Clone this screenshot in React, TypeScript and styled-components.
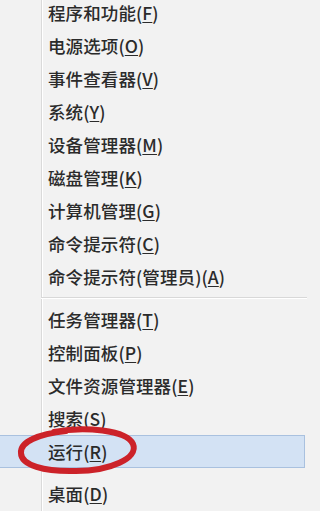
import React from 'react';
import styled, { createGlobalStyle } from 'styled-components';

type Entry = {
  label: string;
  key: string;
  active?: boolean;
  spaced?: boolean;
};

const GlobalStyle = createGlobalStyle`
  html,
  body {
    margin: 0;
    padding: 0;
    background: #f2f2f2;
    overflow: hidden;
  }
`;

const Menu = styled.div`
  position: relative;
  width: 307px;
  height: 511px;
  overflow: hidden;
  background-color: #f2f2f2;
  background-image: linear-gradient(
    to right,
    transparent 41px,
    #dadada 41px,
    #dadada 42px,
    #ffffff 42px,
    #ffffff 43px,
    transparent 43px
  );
  font-family: 'Noto Sans CJK SC', 'Noto Sans', sans-serif;
`;

const List = styled.div`
  display: flex;
  flex-direction: column;
  margin-top: -4px;
`;

const Item = styled.div<{ $active?: boolean; $spaced?: boolean }>`
  box-sizing: border-box;
  height: 33px;
  display: flex;
  align-items: center;
  padding-left: 48px;
  margin-top: ${(p) => (p.$spaced ? '9px' : '0')};
  font-size: 17.5px;
  font-weight: 500;
  color: #2b2b2b;
  letter-spacing: 0.1px;
  background: ${(p) => (p.$active ? '#d3e2f4' : 'transparent')};
  border: 1px solid ${(p) => (p.$active ? '#a9c1df' : 'transparent')};
  border-left: none;
  margin-right: ${(p) => (p.$active ? '2px' : '0')};

  u {
    text-decoration-thickness: 1px;
    text-underline-offset: 2px;
  }
`;

const Separator = styled.div`
  height: 10px;
  margin-left: 41px;
  box-sizing: border-box;
  padding-top: 4px;

  &::before {
    content: '';
    display: block;
    height: 1px;
    background: #d8d8d8;
    border-bottom: 1px solid #ffffff;
  }
`;

const Circle = styled.svg`
  position: absolute;
  left: 14px;
  top: 424px;
  width: 126px;
  height: 54px;
  pointer-events: none;
`;

const topGroup: Entry[] = [
  { label: '程序和功能', key: 'F' },
  { label: '电源选项', key: 'O' },
  { label: '事件查看器', key: 'V' },
  { label: '系统', key: 'Y' },
  { label: '设备管理器', key: 'M' },
  { label: '磁盘管理', key: 'K' },
  { label: '计算机管理', key: 'G' },
  { label: '命令提示符', key: 'C' },
  { label: '命令提示符(管理员)', key: 'A' },
];

const bottomGroup: Entry[] = [
  { label: '任务管理器', key: 'T' },
  { label: '控制面板', key: 'P' },
  { label: '文件资源管理器', key: 'E' },
  { label: '搜索', key: 'S' },
  { label: '运行', key: 'R', active: true },
  { label: '桌面', key: 'D', spaced: true },
];

function MenuRow({ entry }: { entry: Entry }) {
  return (
    <Item $active={entry.active} $spaced={entry.spaced}>
      {entry.label}(<u>{entry.key}</u>)
    </Item>
  );
}

export default function App() {
  return (
    <>
      <GlobalStyle />
      <Menu>
        <List>
          {topGroup.map((e) => (
            <MenuRow key={e.key} entry={e} />
          ))}
          <Separator />
          {bottomGroup.map((e) => (
            <MenuRow key={e.key} entry={e} />
          ))}
        </List>
        {/* red hand-drawn marker round 运行 */}
        <Circle viewBox="0 0 126 54">
          <path
            d="M40 8 C70 2 113 6 119 20 C125 34 96 47 62 47 C30 48 7 41 7 29 C6 18 24 10 52 7"
            fill="none"
            stroke="#cc2229"
            strokeWidth="6"
            strokeLinecap="round"
          />
        </Circle>
      </Menu>
    </>
  );
}
